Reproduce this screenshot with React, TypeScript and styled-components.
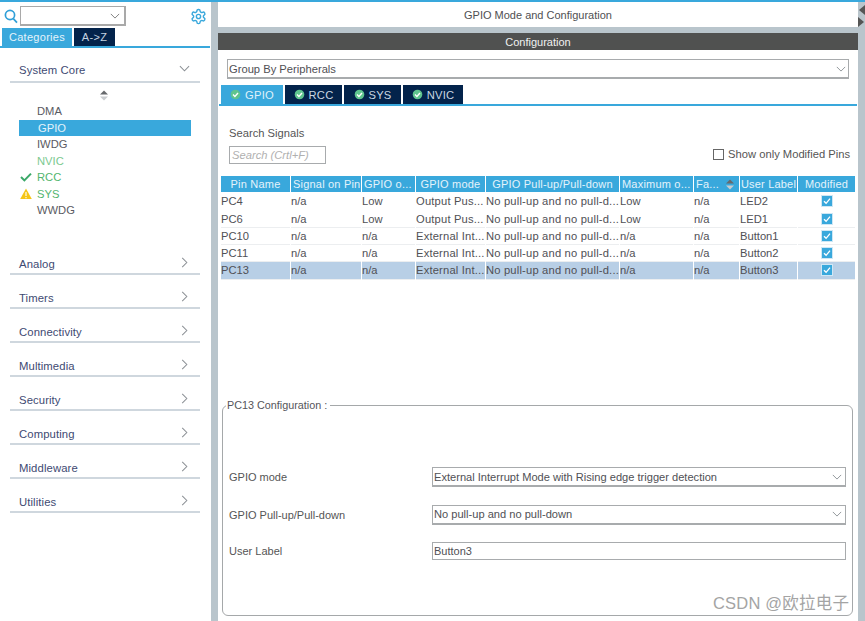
import React from "react";
import styled, { createGlobalStyle } from "styled-components";

const Global = createGlobalStyle`
  html, body { margin: 0; padding: 0; background: #b9c5cc; }
  body { font-family: "Liberation Sans", Arial, sans-serif; font-size: 11.2px; color: #4d4d4f; }
`;

const Page = styled.div`
  width: 865px; height: 621px; overflow: hidden; position: relative;
  display: flex; flex-direction: column; background: #b9c5cc;
`;
const TopLine = styled.div`height: 2px; background: #39a8dc; flex: none;`;
const Columns = styled.div`flex: 1; display: flex; min-height: 0;`;

const Sidebar = styled.aside`
  width: 211px; flex: none; background: #fff; display: flex; flex-direction: column;
`;
const SearchRow = styled.div`
  height: 26px; padding: 2px 4px 0 5px; box-sizing: border-box; display: flex; align-items: center; gap: 2px;
`;
const SearchBox = styled.div`
  width: 106px; height: 20px; box-sizing: border-box; border: 1px solid #a9a9a9; border-bottom-width: 2px; border-right-width: 2px;
  display: flex; align-items: center; justify-content: flex-end; padding-right: 4px; color: #777;
`;
const GearSlot = styled.div`margin-left: auto; display: flex;`;
const SideTabs = styled.div`
  display: flex; gap: 2px; padding-left: 2px; height: 20px; box-sizing: border-box; border-bottom: 2px solid #39a8dc; margin-right: 1px;
`;
const SideTab = styled.div<{ $active?: boolean }>`
  width: ${p => (p.$active ? 70 : 41)}px; display: flex; align-items: center; justify-content: center;
  height: 18px; color: ${p => (p.$active ? "#e4f3fb" : "#c4d2e0")}; background: ${p => (p.$active ? "#39a8dc" : "#03234b")};
  letter-spacing: .3px; font-size: 11px;
`;
const SectionList = styled.div`padding: 13px 11px 0 10px; display: flex; flex-direction: column;`;
const SectionHead = styled.div`
  display: flex; align-items: flex-end; justify-content: space-between; border-bottom: 2px solid #cfd7de;
  padding: 0 10px 0 9px; color: #3e4a72; font-size: 11.3px; line-height: 15px; letter-spacing: .1px;
`;
const Row = styled(SectionHead)`
  margin-top: 12px; padding-bottom: 2px; height: 18px;
  & > span { position: relative; top: 1px; }
`;
const FirstRow = styled(Row)`margin-top: 0;`;
const CoreHead = styled(SectionHead)`padding-bottom: 3px; height: 17px;`;
const Sort = styled.div`height: 13px; margin-top: 7px; display: flex; justify-content: center; margin-right: 3px;`;
const Items = styled.div`
  margin: 0 9px 34px 9px; display: flex; flex-direction: column;
`;
const Item = styled.div<{ $selected?: boolean; $green?: boolean; $ok?: boolean }>`
  height: 16.5px; line-height: 16.5px; display: flex; align-items: center; padding-left: ${p => (p.$selected ? 19 : 18)}px; position: relative;
  color: ${p => (p.$selected ? "#e4f3fb" : p.$ok ? "#52b56e" : p.$green ? "#7cc98f" : "#5a5a62")};
  background: ${p => (p.$selected ? "#39a8dc" : "transparent")};
  font-size: 11.2px;
`;
const ItemIcon = styled.span`position: absolute; left: 1px; top: 2px; display: flex;`;

const Main = styled.main`
  margin-left: 7px; width: 640px; flex: none; display: flex; flex-direction: column;
`;
const Title = styled.div`
  height: 25px; background: #fff; display: flex; align-items: center; justify-content: center; font-size: 11px; color: #4f4f52;
`;
const Band = styled.div`
  margin-top: 6px; height: 17px; background: #505150; color: #f1f1f1; display: flex; align-items: center; justify-content: center; font-size: 11px;
`;
const Body = styled.div`flex: 1; background: #fff; padding: 9px 0 0; display: flex; flex-direction: column; min-height: 0;`;
const Select = styled.div`
  box-sizing: border-box; display: flex; align-items: center; justify-content: space-between;
  border: 1px solid #a8abad; border-bottom-width: 2px; background: #fff; color: #505055; font-size: 11.2px; padding: 0 3px 0 1px;
`;
const GroupSelect = styled(Select)`margin: 0 9px; height: 20px; padding-right: 2px;`;
const TabBar = styled.div`
  margin: 6px 1px 0 1px; height: 21px; box-sizing: border-box; border-bottom: 2px solid #39a8dc; display: flex; gap: 2px; padding-left: 2px;
`;
const Tab = styled.div<{ $active?: boolean; $w: number }>`
  width: ${p => p.$w}px; height: 19px; display: flex; align-items: center; justify-content: center; gap: 4px;
  background: ${p => (p.$active ? "#39a8dc" : "#03234b")}; color: ${p => (p.$active ? "#dff1fa" : "#c9d6e2")}; font-size: 11.2px; letter-spacing: .2px;
`;
const SearchBlock = styled.div`padding: 20px 5px 0 11px; display: flex; justify-content: space-between; align-items: flex-end;`;
const SearchCol = styled.div`display: flex; flex-direction: column; gap: 5px;`;
const SearchLabel = styled.div`font-size: 11.2px; color: #555; line-height: 15px;`;
const SearchInput = styled.div`
  width: 97px; height: 18px; box-sizing: border-box; border: 1px solid #a8abad; color: #b0b0b0; font-style: italic; font-size: 11.2px; line-height: 16px; padding-left: 2px;
`;
const ModPins = styled.label`display: flex; align-items: center; gap: 4px; color: #555; font-size: 11.2px; margin-bottom: 4px; margin-right: 3px;`;
const EmptyBox = styled.span`width: 9px; height: 9px; border: 1px solid #666; background: #fff; display: block;`;

const Table = styled.div`
  margin: 12px 0 0 3px; width: 634px; display: grid;
  grid-template-columns: 69px 70px 53px 69px 133px 73px 45px 57px 57px; column-gap: 1px;
`;
const Th = styled.div<{ $left?: boolean }>`
  height: 16px; margin-bottom: 1px; background: #39a8dc; color: #e4f3fb; font-size: 11px; line-height: 16px; white-space: nowrap; overflow: hidden;
  display: flex; align-items: center; justify-content: ${p => (p.$left ? "flex-start" : "center")};
  padding-left: ${p => (p.$left ? "2px" : "0")}; letter-spacing: .2px; position: relative;
`;
const Td = styled.div<{ $sel?: boolean; $center?: boolean; $trunc?: boolean }>`
  height: 16.5px; margin-bottom: .8px; font-size: 11.2px; line-height: 16px; color: #505055; white-space: nowrap; overflow: hidden;
  background: ${p => (p.$sel ? "#b8cfe6" : "#fff")};
  letter-spacing: ${p => (p.$trunc ? ".18px" : "0")};
  box-shadow: 0 1px 0 #eceef0;
  display: flex; align-items: center; justify-content: ${p => (p.$center ? "center" : "flex-start")};
`;
const Check = styled.span`
  width: 10px; height: 10px; background: #39a8dc; display: flex; align-items: center; justify-content: center; outline: 1px solid #cfe7f5;
`;
const SortMark = styled.span`position: absolute; right: 5px; top: 3px; display: flex;`;
const Spacer = styled.div`flex: 1;`;
const Fieldset = styled.fieldset`
  margin: 0 5px 5px 4px; padding: 0; height: 218px; box-sizing: border-box; border: 1px solid #a5a8aa; border-radius: 6px; min-width: 0;
  display: flex; flex-direction: column;
`;
const Legend = styled.legend`
  margin-left: 3px; padding: 0 3px 0 1px; font-size: 10.8px; color: #55555a; line-height: 14px;
`;
const Form = styled.div`
  padding: 55px 7px 0 6px; display: grid; grid-template-columns: 203px 414px; row-gap: 17.5px; align-items: center;
`;
const FormLabel = styled.div`color: #555; font-size: 11px;`;
const FormSelect = styled(Select)`height: 20px; font-size: 11.1px;`;
const FormInput = styled.div`
  height: 18px; box-sizing: border-box; border: 1px solid #a8abad; color: #505055; font-size: 11px; line-height: 16px; padding-left: 1px;
`;
const Collapse = styled.div`position: absolute; right: 0; top: 5px; display: flex;`;
const Watermark = styled.div`
  position: absolute; left: 713px; top: 594px; font-family: "Liberation Sans", "Noto Sans CJK SC", sans-serif; font-size: 16.5px; color: #a4a4a4; letter-spacing: .2px; line-height: 18px; white-space: nowrap;
`;

const Chev = ({ dir = "down", size = 11, color = "#8a8f94" }: { dir?: "down" | "right"; size?: number; color?: string }) => (
  <svg width={size} height={size} viewBox="0 0 12 12" fill="none" stroke={color} strokeWidth="1.1">
    {dir === "down" ? <path d="M1 3.5 6 8.5 11 3.5" /> : <path d="M3.5 1 8.5 6 3.5 11" />}
  </svg>
);
const TabOk = () => (
  <svg width="11" height="11" viewBox="0 0 11 11">
    <circle cx="5.5" cy="5.5" r="4.8" fill="#5fc48f" />
    <path d="M3 5.6 4.9 7.4 8 4" fill="none" stroke="#fff" strokeWidth="1.4" />
  </svg>
);
const Updown = ({ w = 8 }: { w?: number }) => (
  <svg width={w} height="11" viewBox="0 0 8 11">
    <path d="M4 .5 8 4.5H0Z" fill="#66696c" />
    <path d="M4 10.5 8 6.5H0Z" fill="#c9cccf" />
  </svg>
);
const CheckMark = () => (
  <svg width="8" height="8" viewBox="0 0 8 8"><path d="M1 4.2 3.1 6.3 7 1.6" fill="none" stroke="#fff" strokeWidth="1.3" /></svg>
);

const columns = ["Pin Name", "Signal on Pin", "GPIO o...", "GPIO mode", "GPIO Pull-up/Pull-down", "Maximum o...", "Fa...", "User Label", "Modified"];
const pull = "No pull-up and no pull-d...";
const rows = [
  ["PC4", "n/a", "Low", "Output Pus...", pull, "Low", "n/a", "LED2"],
  ["PC6", "n/a", "Low", "Output Pus...", pull, "Low", "n/a", "LED1"],
  ["PC10", "n/a", "n/a", "External Int...", pull, "n/a", "n/a", "Button1"],
  ["PC11", "n/a", "n/a", "External Int...", pull, "n/a", "n/a", "Button2"],
  ["PC13", "n/a", "n/a", "External Int...", pull, "n/a", "n/a", "Button3"],
];
const categories = ["Analog", "Timers", "Connectivity", "Multimedia", "Security", "Computing", "Middleware", "Utilities"];

export default function App() {
  return (
    <Page>
      <Global />
      <TopLine />
      <Columns>
        <Sidebar>
          <SearchRow>
            <svg width="14" height="15" viewBox="0 0 14 15" fill="none" stroke="#2f9fd8" strokeWidth="1.7" style={{ marginLeft: -1 }}>
              <circle cx="6" cy="6" r="4.6" />
              <path d="M9.3 9.6 13 13.6" />
            </svg>
            <SearchBox><Chev size={10} color="#777" /></SearchBox>
            <GearSlot>
              <svg width="17" height="17" viewBox="0 0 24 24" fill="none" stroke="#39a8dc" strokeWidth="2" strokeLinecap="round" strokeLinejoin="round">
                <path d="M12.22 2h-.44a2 2 0 0 0-2 2v.18a2 2 0 0 1-1 1.73l-.43.25a2 2 0 0 1-2 0l-.15-.08a2 2 0 0 0-2.73.73l-.22.38a2 2 0 0 0 .73 2.73l.15.1a2 2 0 0 1 1 1.72v.51a2 2 0 0 1-1 1.74l-.15.09a2 2 0 0 0-.73 2.73l.22.38a2 2 0 0 0 2.73.73l.15-.08a2 2 0 0 1 2 0l.43.25a2 2 0 0 1 1 1.73V20a2 2 0 0 0 2 2h.44a2 2 0 0 0 2-2v-.18a2 2 0 0 1 1-1.73l.43-.25a2 2 0 0 1 2 0l.15.08a2 2 0 0 0 2.73-.73l.22-.39a2 2 0 0 0-.73-2.73l-.15-.08a2 2 0 0 1-1-1.74v-.5a2 2 0 0 1 1-1.74l.15-.09a2 2 0 0 0 .73-2.73l-.22-.38a2 2 0 0 0-2.73-.73l-.15.08a2 2 0 0 1-2 0l-.43-.25a2 2 0 0 1-1-1.73V4a2 2 0 0 0-2-2z" />
                <circle cx="12" cy="12" r="3" />
              </svg>
            </GearSlot>
          </SearchRow>
          <SideTabs>
            <SideTab $active>Categories</SideTab>
            <SideTab>A-&gt;Z</SideTab>
          </SideTabs>
          <SectionList>
            <CoreHead><span>System Core</span><span><Chev /></span></CoreHead>
            <Sort><Updown /></Sort>
            <Items>
              <Item>DMA</Item>
              <Item $selected>GPIO</Item>
              <Item>IWDG</Item>
              <Item $green>NVIC</Item>
              <Item $ok>
                <ItemIcon>
                  <svg width="12" height="12" viewBox="0 0 12 12"><path d="M1 6 4.4 9.4 11 2.6" fill="none" stroke="#3aa868" strokeWidth="2" /></svg>
                </ItemIcon>
                RCC
              </Item>
              <Item $ok>
                <ItemIcon>
                  <svg width="12" height="12" viewBox="0 0 12 12"><path d="M6 .6 11.8 11H.2Z" fill="#f5c518" /><path d="M6 4v4M6 9v1.2" stroke="#fff" strokeWidth="1.1" /></svg>
                </ItemIcon>
                SYS
              </Item>
              <Item>WWDG</Item>
            </Items>
            {categories.map((c, i) => {
              const R = i === 0 ? FirstRow : Row;
              return (
                <R key={c}>
                  <span>{c}</span>
                  <span><Chev dir="right" /></span>
                </R>
              );
            })}
          </SectionList>
        </Sidebar>
        <Main>
          <Title>GPIO Mode and Configuration</Title>
          <Band>Configuration</Band>
          <Body>
            <GroupSelect>Group By Peripherals<Chev size={10} /></GroupSelect>
            <TabBar>
              <Tab $active $w={62}><TabOk />GPIO</Tab>
              <Tab $w={57}><TabOk />RCC</Tab>
              <Tab $w={57}><TabOk />SYS</Tab>
              <Tab $w={60}><TabOk />NVIC</Tab>
            </TabBar>
            <SearchBlock>
              <SearchCol>
                <SearchLabel>Search Signals</SearchLabel>
                <SearchInput>Search (Crtl+F)</SearchInput>
              </SearchCol>
              <ModPins><EmptyBox />Show only Modified Pins</ModPins>
            </SearchBlock>
            <Table>
              {columns.map((c, i) => (
                <Th key={c} $left={i === 1 || i === 2 || i === 5 || i === 6}>
                  {c}
                  {c === "Fa..." && <SortMark><Updown /></SortMark>}
                </Th>
              ))}
              {rows.map((r, ri) => (
                <React.Fragment key={r[0]}>
                  {r.map((v, ci) => <Td key={ci} $sel={ri === 4} $trunc={v.endsWith("...")}>{v}</Td>)}
                  <Td $sel={ri === 4} $center><Check><CheckMark /></Check></Td>
                </React.Fragment>
              ))}
            </Table>
            <Spacer />
            <Fieldset>
              <Legend>PC13 Configuration :</Legend>
              <Form>
                <FormLabel>GPIO mode</FormLabel>
                <FormSelect>External Interrupt Mode with Rising edge trigger detection<Chev size={10} /></FormSelect>
                <FormLabel>GPIO Pull-up/Pull-down</FormLabel>
                <FormSelect>No pull-up and no pull-down<Chev size={10} /></FormSelect>
                <FormLabel>User Label</FormLabel>
                <FormInput>Button3</FormInput>
              </Form>
            </Fieldset>
          </Body>
        </Main>
      </Columns>
      <Collapse>
        <svg width="7" height="22" viewBox="0 0 7 22"><path d="M7 0V10L1 5Z" fill="#555" /><path d="M0 12V22L6 17Z" fill="#555" /></svg>
      </Collapse>
      <Watermark>CSDN @欧拉电子</Watermark>
    </Page>
  );
}
